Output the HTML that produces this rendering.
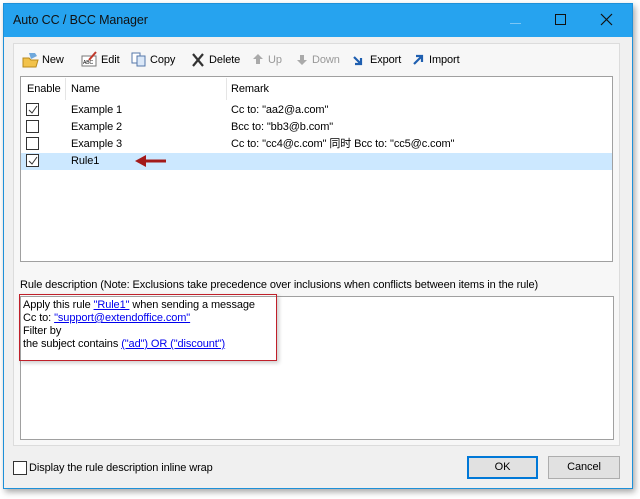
<!DOCTYPE html>
<html><head><style>
*{margin:0;padding:0;box-sizing:border-box}
body{width:640px;height:499px;background:#fff;font-family:"Liberation Sans","Noto Sans CJK SC",sans-serif;font-size:11px;letter-spacing:-0.1px;color:#000;position:relative;overflow:hidden}
.a{position:absolute}
.win{left:3px;top:3px;width:630px;height:486px;background:#f0f0f0;border:1px solid #1e90d8;box-shadow:2px 3px 6px rgba(0,0,0,.35)}
.title{left:0;top:0;width:628px;height:33px;background:#26a3ef}
.t{white-space:nowrap;line-height:14px}
.cb{width:13px;height:13px;border:1px solid #333;background:#fff}
.lnk{color:#0000ee;text-decoration:underline}
.btn{height:23px;background:#e1e1e1;border:1px solid #adadad;text-align:center;line-height:21px}
</style></head><body>
<div class="a win">
 <div class="a title"></div>
</div>
<div class="a t" style="left:13px;top:13px;font-size:12.5px;color:#111">Auto CC / BCC Manager</div>
<div class="a" style="left:510px;top:23px;width:11px;height:1px;background:#7cc6f5"></div>
<div class="a" style="left:555px;top:14px;width:11px;height:11px;border:1px solid #111"></div>
<svg class="a" style="left:600px;top:13px" width="13" height="13"><path d="M1 1L12 12M12 1L1 12" stroke="#111" stroke-width="1.2"/></svg>

<div class="a" style="left:13px;top:43px;width:607px;height:403px;background:#f7f7f7;border:1px solid #dcdcdc"></div>

<!-- toolbar -->
<svg class="a" style="left:22px;top:52px" width="18" height="16"><path d="M1 6h6l2 2h7l-2 7H1z" fill="#f2c24a" stroke="#b98a1c"/><path d="M7 1l6 0 2 3-6 3z" fill="#6fa8dc"/></svg>
<div class="a t" style="left:42px;top:53px">New</div>
<svg class="a" style="left:81px;top:51px" width="17" height="17"><rect x="1" y="5" width="14" height="10" fill="#fff" stroke="#777"/><text x="2" y="13" font-size="5" font-family="Liberation Sans">ABC</text><path d="M8 9L15 1" stroke="#c0392b" stroke-width="2"/></svg>
<div class="a t" style="left:101px;top:53px">Edit</div>
<svg class="a" style="left:131px;top:52px" width="16" height="16"><rect x="1" y="1" width="8" height="10" fill="#fff" stroke="#5577aa"/><rect x="6" y="4" width="8" height="10" fill="#dbe8f8" stroke="#5577aa"/></svg>
<div class="a t" style="left:150px;top:53px">Copy</div>
<svg class="a" style="left:191px;top:53px" width="14" height="14"><path d="M2 1L12 13M12 1L2 13" stroke="#333" stroke-width="2.2"/></svg>
<div class="a t" style="left:209px;top:53px">Delete</div>
<svg class="a" style="left:253px;top:54px" width="10" height="11"><path d="M5 0L10 5H7v5H3V5H0z" fill="#aaa"/></svg>
<div class="a t" style="left:268px;top:53px;color:#999">Up</div>
<svg class="a" style="left:297px;top:54px" width="10" height="11"><path d="M5 11L10 6H7V1H3v5H0z" fill="#aaa"/></svg>
<div class="a t" style="left:312px;top:53px;color:#999">Down</div>
<svg class="a" style="left:353px;top:54px" width="12" height="12"><path d="M1 3l7 7M8 4v6H2" stroke="#1f5fb0" stroke-width="2.2" fill="none"/></svg>
<div class="a t" style="left:370px;top:53px">Export</div>
<svg class="a" style="left:412px;top:54px" width="12" height="12"><path d="M2 10l8-8M4 2h6v6" stroke="#1f5fb0" stroke-width="2.2" fill="none"/></svg>
<div class="a t" style="left:429px;top:53px">Import</div>

<!-- list -->
<div class="a" style="left:20px;top:76px;width:593px;height:186px;background:#fff;border:1px solid #a0a0a0"></div>
<div class="a" style="left:65px;top:78px;width:1px;height:22px;background:#e5e5e5"></div>
<div class="a" style="left:226px;top:78px;width:1px;height:22px;background:#e5e5e5"></div>
<div class="a t" style="left:27px;top:82px">Enable</div>
<div class="a t" style="left:71px;top:82px">Name</div>
<div class="a t" style="left:231px;top:82px">Remark</div>
<div class="a" style="left:21px;top:153px;width:591px;height:17px;background:#cce8ff"></div>
<div class="a cb" style="left:26px;top:103px"></div><svg class="a" style="left:27px;top:104px" width="11" height="11"><path d="M2 6l3 3 5-7" stroke="#333" fill="none"/></svg>
<div class="a cb" style="left:26px;top:120px"></div>
<div class="a cb" style="left:26px;top:137px"></div>
<div class="a cb" style="left:26px;top:154px"></div><svg class="a" style="left:27px;top:155px" width="11" height="11"><path d="M2 6l3 3 5-7" stroke="#333" fill="none"/></svg>
<div class="a t" style="left:71px;top:103px">Example 1</div>
<div class="a t" style="left:71px;top:120px">Example 2</div>
<div class="a t" style="left:71px;top:137px">Example 3</div>
<div class="a t" style="left:71px;top:154px">Rule1</div>
<div class="a t" style="left:231px;top:103px">Cc to: "aa2@a.com"</div>
<div class="a t" style="left:231px;top:120px">Bcc to: "bb3@b.com"</div>
<div class="a t" style="left:231px;top:137px">Cc to: "cc4@c.com" 同时 Bcc to: "cc5@c.com"</div>
<svg class="a" style="left:134px;top:154px" width="34" height="14"><path d="M32 7H10" stroke="#a31a1a" stroke-width="3"/><path d="M1 7L12 1V13z" fill="#a31a1a"/></svg>

<div class="a t" style="left:20px;top:278px">Rule description (Note: Exclusions take precedence over inclusions when conflicts between items in the rule)</div>
<div class="a" style="left:20px;top:296px;width:594px;height:144px;background:#fff;border:1px solid #a0a0a0"></div>
<div class="a" style="left:19px;top:294px;width:258px;height:67px;border:1px solid #c0202a;box-shadow:2px 2px 4px rgba(0,0,0,.2)"></div>
<div class="a t" style="left:23px;top:299px;line-height:13px">Apply this rule <span class="lnk">"Rule1"</span> when sending a message<br>Cc to: <span class="lnk">"support@extendoffice.com"</span><br>Filter by<br>the subject contains <span class="lnk">("ad") OR ("discount")</span></div>

<div class="a cb" style="left:13px;top:461px;width:14px;height:14px"></div>
<div class="a t" style="left:29px;top:461px">Display the rule description inline wrap</div>
<div class="a btn" style="left:467px;top:456px;width:71px;border:2px solid #0078d7;line-height:19px">OK</div>
<div class="a btn" style="left:548px;top:456px;width:72px">Cancel</div>
</body></html>
